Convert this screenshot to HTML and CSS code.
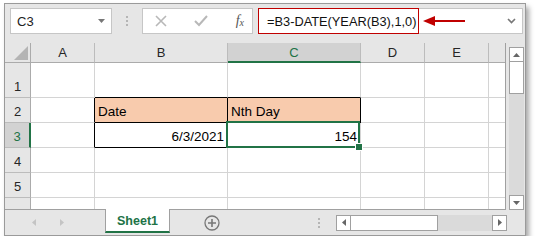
FILE: index.html
```html
<!DOCTYPE html>
<html lang="en">
<head>
  <meta charset="UTF-8">
  <title>Nth day of year</title>
  <link rel="stylesheet" href="styles.css">
</head>
<body>
  <div class="window">
    <div class="toolbar">
      <div class="namebox">
        <span>C3</span>
        <svg class="caret" width="7" height="4" viewBox="0 0 7 4"><path d="M0 0h7L3.5 4z" fill="#777"/></svg>
      </div>
      <div class="grip"><i></i><i></i><i></i></div>
      <div class="fxbtns">
        <svg width="12" height="12" viewBox="0 0 12 12"><path d="M1 1l10 10M11 1L1 11" stroke="#b8b8b8" stroke-width="1.6"/></svg>
        <svg width="14" height="12" viewBox="0 0 14 12"><path d="M1 6l4 4 8-9" stroke="#b8b8b8" stroke-width="2" fill="none"/></svg>
        <span class="fx">f<sub>x</sub></span>
      </div>
      <div class="formula">
        <div class="formula-text">=B3-DATE(YEAR(B3),1,0)</div>
        <svg class="arrow" width="42" height="10" viewBox="0 0 42 10"><path d="M8 5h34" stroke="#c00000" stroke-width="2"/><path d="M0 5l12-5v10z" fill="#c00000"/></svg>
        <svg class="chev" width="9" height="6" viewBox="0 0 9 6"><path d="M1 1l3.5 3.5L8 1" stroke="#777" stroke-width="1.6" fill="none"/></svg>
      </div>
    </div>

    <div class="main">
      <div class="sheet">
        <div class="grid">
          <div class="c h corner"><svg width="14" height="14" viewBox="0 0 14 14"><path d="M14 0v14H0z" fill="#b4b4b4"/></svg></div>
          <div class="c h col">A</div>
          <div class="c h col">B</div>
          <div class="c h col on">C</div>
          <div class="c h col">D</div>
          <div class="c h col">E</div>
          <div class="c h col"></div>

          <div class="c h row">1</div>
          <div class="c"></div>
          <div class="c bb"></div>
          <div class="c bb"></div>
          <div class="c"></div>
          <div class="c"></div>
          <div class="c"></div>

          <div class="c h row">2</div>
          <div class="c br"></div>
          <div class="c fill bb br">Date</div>
          <div class="c fill bb br">Nth Day</div>
          <div class="c"></div>
          <div class="c"></div>
          <div class="c"></div>

          <div class="c h row on">3</div>
          <div class="c br"></div>
          <div class="c bb br num">6/3/2021</div>
          <div class="c num sel">154</div>
          <div class="c"></div>
          <div class="c"></div>
          <div class="c"></div>

          <div class="c h row">4</div>
          <div class="c"></div>
          <div class="c"></div>
          <div class="c"></div>
          <div class="c"></div>
          <div class="c"></div>
          <div class="c"></div>

          <div class="c h row">5</div>
          <div class="c"></div>
          <div class="c"></div>
          <div class="c"></div>
          <div class="c"></div>
          <div class="c"></div>
          <div class="c"></div>

          <div class="c h row"></div>
          <div class="c"></div>
          <div class="c"></div>
          <div class="c"></div>
          <div class="c"></div>
          <div class="c"></div>
          <div class="c"></div>
        </div>
      </div>
      <div class="vscroll">
        <div class="sb-btn"><svg width="7" height="4" viewBox="0 0 7 4"><path d="M0 4h7L3.5 0z" fill="#666"/></svg></div>
        <div class="sb-thumb"></div>
        <div class="sb-track"></div>
        <div class="sb-btn"><svg width="7" height="4" viewBox="0 0 7 4"><path d="M0 0h7L3.5 4z" fill="#666"/></svg></div>
      </div>
    </div>

    <div class="tabbar">
      <div class="tabnav">
        <svg width="4" height="7" viewBox="0 0 4 7"><path d="M4 0v7L0 3.5z" fill="#c4c4c4"/></svg>
        <svg width="4" height="7" viewBox="0 0 4 7"><path d="M0 0v7L4 3.5z" fill="#c4c4c4"/></svg>
      </div>
      <div class="tab">Sheet1</div>
      <div class="addsheet">
        <svg width="16" height="16" viewBox="0 0 16 16"><circle cx="8" cy="8" r="7" stroke="#777" stroke-width="1.3" fill="none"/><path d="M8 4v8M4 8h8" stroke="#777" stroke-width="1.6"/></svg>
      </div>
      <div class="hzone">
        <div class="dots"><i></i><i></i><i></i></div>
        <div class="hbar">
          <div class="hbtn"><svg width="4" height="7" viewBox="0 0 4 7"><path d="M4 0v7L0 3.5z" fill="#666"/></svg></div>
          <div class="hthumb"></div>
          <div class="htrack"></div>
          <div class="hbtn"><svg width="4" height="7" viewBox="0 0 4 7"><path d="M0 0v7L4 3.5z" fill="#666"/></svg></div>
        </div>
      </div>
    </div>
  </div>
</body>
</html>
```

FILE: styles.css
```css
* {
  box-sizing: border-box;
}
body {
  margin: 0;
  padding: 3px 0 0 4px;
  background: #ffffff;
  font-family: 'Liberation Sans', Arial, sans-serif;
  color: #222;
}
.window {
  width: 522px;
  height: 233px;
  border: 1px solid #9a9a9a;
  background: #e6e6e6;
  display: flex;
  flex-direction: column;
  box-shadow: 3px 4px 5px rgba(0,0,0,0.35);
}

/* formula bar */
.toolbar {
  height: 39px;
  flex: none;
  display: flex;
  align-items: flex-start;
  padding: 4px 2px 0 5px;
}
.namebox, .fxbtns, .formula {
  height: 26px;
  background: #fff;
  border: 1px solid #c6c6c6;
  display: flex;
  align-items: center;
}
.namebox {
  width: 102px;
  padding: 0 6px 0 6px;
  justify-content: space-between;
  font-size: 13px;
}
.grip {
  width: 30px;
  height: 26px;
  display: flex;
  flex-direction: column;
  align-items: center;
  justify-content: center;
  gap: 2px;
}
.grip i, .dots i {
  width: 2px;
  height: 2px;
  background: #b5b5b5;
}
.fxbtns {
  width: 111px;
  padding: 0 8px 0 12px;
  justify-content: space-between;
}
.fx {
  font-family: 'Liberation Serif', serif;
  font-style: italic;
  font-size: 14px;
  color: #555;
}
.fx sub {
  font-size: 10px;
  vertical-align: -1px;
}
.formula {
  width: 265px;
  margin-left: 5px;
}
.formula-text {
  width: 161px;
  height: 26px;
  margin: -1px 0 -1px -1px;
  border: 1px solid #c00000;
  padding: 0 0 0 8px;
  display: flex;
  align-items: center;
  font-size: 12.8px;
  color: #111;
  white-space: nowrap;
}
.arrow {
  margin-left: 4px;
}
.chev {
  margin-left: auto;
  margin-right: 6px;
}

/* sheet */
.main {
  height: 167px;
  flex: none;
  display: flex;
}
.sheet {
  width: 501px;
  height: 167px;
  overflow: hidden;
  background: #fff;
  border-right: 1px solid #a0a0a0;
  border-bottom: 1px solid #a0a0a0;
}
.grid {
  display: grid;
  grid-template-columns: 26px 64px 133px 133px 64px 64px 20px;
  grid-template-rows: 20px 35px 25px 25px 25px 25px 15px;
  font-size: 13.5px;
}
.c {
  border-right: 1px solid #d4d4d4;
  border-bottom: 1px solid #d4d4d4;
  display: flex;
  align-items: flex-end;
  padding: 0 3px 4px 3px;
  line-height: 1;
  color: #000;
}
.h {
  background: #e6e6e6;
  border-color: #bcbcbc;
  color: #262626;
  justify-content: center;
  font-size: 13px;
}
.col {
  align-items: center;
  padding: 0;
  border-bottom-color: #ababab;
}
.row {
  border-right-color: #ababab;
  padding: 0 0 4px 0;
}
.corner {
  padding: 0 2px 2px 0;
  justify-content: flex-end;
  border-bottom-color: #ababab;
  border-right-color: #ababab;
}
.h.on {
  background: #d2d2d2;
  color: #217346;
}
.col.on {
  border-bottom: 2px solid #217346;
}
.row.on {
  border-right: 2px solid #217346;
}
.fill {
  background: #f8cbad;
}
.bb {
  border-bottom-color: #000;
}
.br {
  border-right-color: #000;
}
.num {
  justify-content: flex-end;
}
.sel {
  position: relative;
}
.sel::after {
  content: "";
  position: absolute;
  left: -2px;
  top: -2px;
  right: 0;
  bottom: -1px;
  border: 2px solid #217346;
}
.sel::before {
  content: "";
  position: absolute;
  right: -3px;
  bottom: -4px;
  width: 6px;
  height: 6px;
  background: #217346;
  border: 1px solid #fff;
  z-index: 1;
}

/* vertical scrollbar */
.vscroll {
  width: 19px;
  padding: 4px 1px 0 3px;
  display: flex;
  flex-direction: column;
  background: #e6e6e6;
}
.sb-btn, .hbtn {
  background: #fff;
  border: 1px solid #a0a0a0;
  display: flex;
  align-items: center;
  justify-content: center;
}
.sb-btn {
  height: 15px;
}
.sb-thumb {
  height: 32px;
  background: #fff;
  border: 1px solid #a0a0a0;
  border-top: none;
}
.sb-track {
  flex: 1;
  background: #dadada;
}

/* sheet tabs */
.tabbar {
  height: 25px;
  flex: none;
  display: flex;
  align-items: flex-start;
}
.tabnav {
  width: 100px;
  height: 25px;
  flex: none;
  display: flex;
  align-items: center;
  padding-left: 27px;
  gap: 24px;
}
.tab {
  width: 65px;
  height: 24px;
  flex: none;
  margin-top: -1px;
  background: #fff;
  border-left: 1px solid #a0a0a0;
  border-right: 1px solid #a0a0a0;
  border-bottom: 2px solid #217346;
  display: flex;
  align-items: center;
  justify-content: center;
  padding-top: 2px;
  font-size: 12.5px;
  font-weight: bold;
  color: #217346;
}
.addsheet {
  width: 84px;
  height: 25px;
  flex: none;
  padding-left: 34px;
  display: flex;
  align-items: center;
}
.hzone {
  width: 253px;
  height: 25px;
  flex: none;
  display: flex;
  align-items: center;
  padding-left: 59px;
}
.dots {
  width: 12px;
  flex: none;
  display: flex;
  flex-direction: column;
  align-items: center;
  gap: 2px;
}
.hbar {
  width: 171px;
  height: 16px;
  flex: none;
  margin-left: 11px;
  display: flex;
}
.hbtn {
  width: 15px;
  flex: none;
}
.hthumb {
  width: 87px;
  flex: none;
  background: #fff;
  border: 1px solid #a0a0a0;
  border-left: none;
}
.htrack {
  flex: 1;
  background: #dadada;
}
```
